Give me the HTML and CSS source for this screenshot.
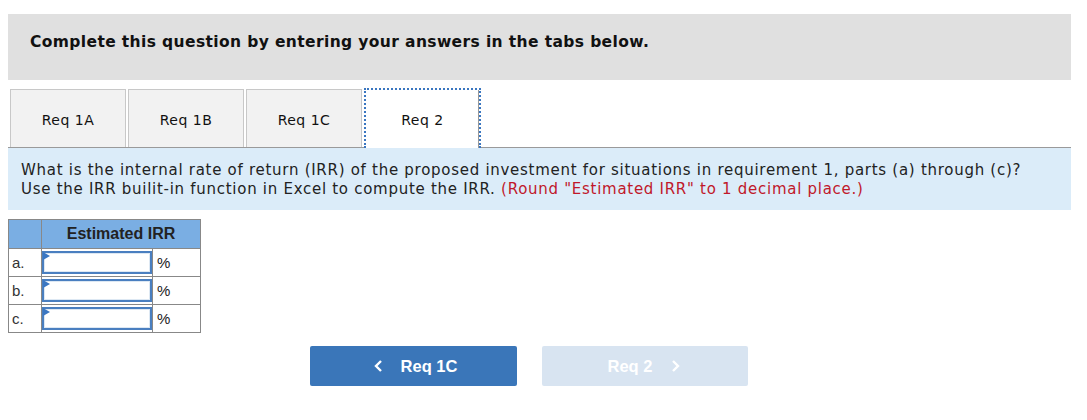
FILE: index.html
```html
<!DOCTYPE html>
<html>
<head>
<meta charset="utf-8">
<link rel="stylesheet" href="styles.css">
</head>
<body>
<div class="page">
  <div class="banner">Complete this question by entering your answers in the tabs below.</div>
  <div class="tabs">
    <div class="tab">Req 1A</div>
    <div class="tab">Req 1B</div>
    <div class="tab">Req 1C</div>
    <div class="tab active">Req 2</div>
  </div>
  <div class="question">
    What is the internal rate of return (IRR) of the proposed investment for situations in requirement 1, parts (a) through (c)?<br>
    Use the IRR builit-in function in Excel to compute the IRR. <span class="red">(Round "Estimated IRR" to 1 decimal place.)</span>
  </div>
  <table class="irr">
    <colgroup><col class="c1"><col class="c2"><col class="c3"></colgroup>
    <tr class="head"><th></th><th colspan="2">Estimated IRR</th></tr>
    <tr><td class="lbl">a.</td><td class="inp"><div class="box"></div></td><td class="pct">%</td></tr>
    <tr><td class="lbl">b.</td><td class="inp"><div class="box"></div></td><td class="pct">%</td></tr>
    <tr><td class="lbl">c.</td><td class="inp"><div class="box"></div></td><td class="pct">%</td></tr>
  </table>
  <div class="nav">
    <div class="btn prev"><svg width="10" height="14" viewBox="0 0 10 14"><polyline points="7,2 2,7 7,12" fill="none" stroke="#fff" stroke-width="2.4"/></svg><span>Req 1C</span></div>
    <div class="btn next"><span>Req 2</span><svg width="10" height="14" viewBox="0 0 10 14"><polyline points="3,2 8,7 3,12" fill="none" stroke="#fff" stroke-width="2.4"/></svg></div>
  </div>
</div>
</body>
</html>
```
FILE: styles.css
```css
html, body { margin: 0; padding: 0; background: #fff; }
.page { padding: 14px 16px 0 8px; font-family: "DejaVu Sans", Verdana, sans-serif; color: #111; }
.banner {
  background: #e0e0e0;
  height: 66px;
  box-sizing: border-box;
  padding: 18px 0 0 22px;
  font-weight: bold;
  font-size: 15.5px;
  line-height: 20px;
  letter-spacing: 0.38px;
}
.tabs {
  display: flex;
  gap: 2px;
  margin-top: 9px;
  padding-left: 2px;
  border-bottom: 1px solid #9a9a9a;
  height: 58px;
  align-items: stretch;
}
.tab {
  width: 114px;
  border: 1px solid #c8c8c8;
  border-bottom: none;
  background: #f2f2f2;
  display: flex;
  align-items: center;
  justify-content: center;
  font-size: 14px;
  letter-spacing: 0.5px;
  padding-top: 2px;
  box-sizing: content-box;
}
.tab.active {
  background: #fff;
  width: 113px;
  border: 2px dotted #3a76c0;
  border-bottom: none;
  margin-top: -1px;
  margin-bottom: -1px;
  padding-bottom: 1px;
  position: relative;
  z-index: 1;
  box-shadow: inset -1px 0 0 #9a9a9a;
}
.question {
  background: #dbecf9;
  padding: 13px 13px 11px 13px;
  font-size: 15px;
  line-height: 19px;
  letter-spacing: 0.72px;
  color: #222;
}
.red { color: #c0182a; }
.irr {
  margin-top: 9px;
  border-collapse: collapse;
  border: 1px solid #777;
  table-layout: fixed;
  width: 192px;
  font-family: "Liberation Sans", Arial, sans-serif;
}
.c1 { width: 33px; }
.c2 { width: 111px; }
.c3 { width: 48px; }
.irr th, .irr td { border: 1px solid #888; padding: 0; }
.irr .head th { background: #7aaee3; height: 28px; font-size: 16px; font-weight: bold; color: #222; }
.irr td { height: 27px; }
.irr .lbl { font-size: 15px; color: #333; padding-left: 3px; }
.irr .inp { position: relative; }
.box {
  height: 23px;
  margin: 1px 0;
  border: 2px solid #4a7fc0;
  box-sizing: border-box;
  background: #fff;
  box-shadow: inset 0 0 0 1px #dde8f3;
  position: relative;
}
.box::before {
  content: "";
  position: absolute;
  left: -1px; top: -1px;
  border-left: 7px solid #3b77c2;
  border-top: 4px solid transparent;
  border-bottom: 4px solid transparent;
}
.irr .pct { font-size: 15px; padding-left: 4px; color: #222; }
.nav {
  display: flex;
  gap: 25px;
  margin-top: 13px;
  padding-left: 302px;
}
.btn {
  width: 207px;
  height: 40px;
  border-radius: 2px;
  display: flex;
  align-items: center;
  justify-content: center;
  color: #fff;
  font-family: "Liberation Sans", Arial, sans-serif;
  font-weight: bold;
  font-size: 16.5px;
  box-sizing: border-box;
}
.btn.prev { background: #3a76b9; gap: 17px; padding-left: 4px; }
.btn.next { background: #d8e4f1; width: 206px; gap: 18px; padding-right: 2px; }
.btn svg { display: block; }
```
